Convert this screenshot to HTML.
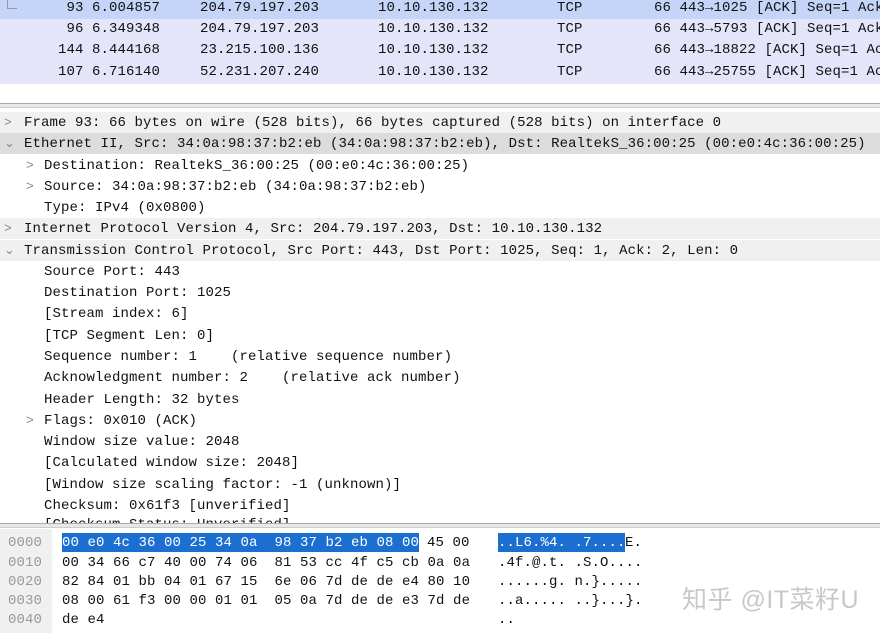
<!DOCTYPE html><html><head><style>
body{margin:0;width:880px;height:633px;overflow:hidden;background:#fff;font-family:"Liberation Mono",monospace;font-size:14px;color:#111;position:relative;letter-spacing:0.1px}
.r{position:absolute;left:0;width:880px;height:21px;line-height:21px;white-space:pre}
.t{position:absolute;top:0}
.d{position:absolute;left:0;width:880px;height:21.3px;line-height:22px;white-space:pre}
.d.b{background:#f0f0f0}
.d.s{background:#dcdcdc}
.d .a{position:absolute;left:4px;color:#888;font-size:13px}
.d .x{position:absolute}
.h{position:absolute;left:0;height:19.3px;line-height:20px;white-space:pre}
</style></head><body>
<div style="position:absolute;left:0;top:0;width:880px;height:84px;background:#e4e4fa"></div>
<div style="position:absolute;left:0;top:0;width:880px;height:19px;background:#c5d5f7"></div>
<div style="position:absolute;left:7px;top:0;width:9px;height:8px;border-left:1px solid #999;border-bottom:1px solid #999"></div>
<div class="r" style="top:-2px"><span class="t" style="left:41px">   93 6.004857</span><span class="t" style="left:200px">204.79.197.203</span><span class="t" style="left:378px">10.10.130.132</span><span class="t" style="left:557px">TCP</span><span class="t" style="left:654px">66 443→1025 [ACK] Seq=1 Ack</span></div>
<div class="r" style="top:19px"><span class="t" style="left:41px">   96 6.349348</span><span class="t" style="left:200px">204.79.197.203</span><span class="t" style="left:378px">10.10.130.132</span><span class="t" style="left:557px">TCP</span><span class="t" style="left:654px">66 443→5793 [ACK] Seq=1 Ack</span></div>
<div class="r" style="top:40px"><span class="t" style="left:41px">  144 8.444168</span><span class="t" style="left:200px">23.215.100.136</span><span class="t" style="left:378px">10.10.130.132</span><span class="t" style="left:557px">TCP</span><span class="t" style="left:654px">66 443→18822 [ACK] Seq=1 Ac</span></div>
<div class="r" style="top:62px"><span class="t" style="left:41px">  107 6.716140</span><span class="t" style="left:200px">52.231.207.240</span><span class="t" style="left:378px">10.10.130.132</span><span class="t" style="left:557px">TCP</span><span class="t" style="left:654px">66 443→25755 [ACK] Seq=1 Ac</span></div>
<div style="position:absolute;left:0;top:103px;width:880px;height:3px;border-top:1px solid #aaa;border-bottom:1px solid #ccc;background:#e8e8e8"></div>
<div class="d b" style="top:112px"><span class="a">&gt;</span><span class="x" style="left:24px">Frame 93: 66 bytes on wire (528 bits), 66 bytes captured (528 bits) on interface 0</span></div>
<div class="d s" style="top:133px"><span class="a">⌄</span><span class="x" style="left:24px">Ethernet II, Src: 34:0a:98:37:b2:eb (34:0a:98:37:b2:eb), Dst: RealtekS_36:00:25 (00:e0:4c:36:00:25)</span></div>
<div class="d" style="top:155px"><span class="a" style="left:26px">&gt;</span><span class="x" style="left:44px">Destination: RealtekS_36:00:25 (00:e0:4c:36:00:25)</span></div>
<div class="d" style="top:176px"><span class="a" style="left:26px">&gt;</span><span class="x" style="left:44px">Source: 34:0a:98:37:b2:eb (34:0a:98:37:b2:eb)</span></div>
<div class="d" style="top:197px"><span class="x" style="left:44px">Type: IPv4 (0x0800)</span></div>
<div class="d b" style="top:218px"><span class="a">&gt;</span><span class="x" style="left:24px">Internet Protocol Version 4, Src: 204.79.197.203, Dst: 10.10.130.132</span></div>
<div class="d b" style="top:240px"><span class="a">⌄</span><span class="x" style="left:24px">Transmission Control Protocol, Src Port: 443, Dst Port: 1025, Seq: 1, Ack: 2, Len: 0</span></div>
<div class="d" style="top:261px"><span class="x" style="left:44px">Source Port: 443</span></div>
<div class="d" style="top:282px"><span class="x" style="left:44px">Destination Port: 1025</span></div>
<div class="d" style="top:303px"><span class="x" style="left:44px">[Stream index: 6]</span></div>
<div class="d" style="top:325px"><span class="x" style="left:44px">[TCP Segment Len: 0]</span></div>
<div class="d" style="top:346px"><span class="x" style="left:44px">Sequence number: 1    (relative sequence number)</span></div>
<div class="d" style="top:367px"><span class="x" style="left:44px">Acknowledgment number: 2    (relative ack number)</span></div>
<div class="d" style="top:389px"><span class="x" style="left:44px">Header Length: 32 bytes</span></div>
<div class="d" style="top:410px"><span class="a" style="left:26px">&gt;</span><span class="x" style="left:44px">Flags: 0x010 (ACK)</span></div>
<div class="d" style="top:431px"><span class="x" style="left:44px">Window size value: 2048</span></div>
<div class="d" style="top:452px"><span class="x" style="left:44px">[Calculated window size: 2048]</span></div>
<div class="d" style="top:474px"><span class="x" style="left:44px">[Window size scaling factor: -1 (unknown)]</span></div>
<div class="d" style="top:495px"><span class="x" style="left:44px">Checksum: 0x61f3 [unverified]</span></div>
<div class="d" style="top:514px;height:10px;overflow:hidden"><span class="x" style="left:44px">[Checksum Status: Unverified]</span></div>
<div style="position:absolute;left:0;top:523px;width:880px;height:3px;border-top:1px solid #aaa;border-bottom:1px solid #ccc;background:#e8e8e8"></div>
<div style="position:absolute;left:0;top:529px;width:52px;height:104px;background:#f0f0f0"></div>
<div style="position:absolute;left:62px;top:533px;width:357px;height:19px;background:#1a6fd0"></div>
<div style="position:absolute;left:498px;top:533px;width:127px;height:19px;background:#1a6fd0"></div>
<div class="h" style="top:533px"><span class="t" style="left:8px;color:#999">0000</span><span class="t" style="left:62px;color:#fff">00 e0 4c 36 00 25 34 0a  98 37 b2 eb 08 00</span><span class="t" style="left:427px">45 00</span><span class="t" style="left:498px;color:#fff">..L6.%4. .7....</span><span class="t" style="left:625px">E.</span></div>
<div class="h" style="top:553px"><span class="t" style="left:8px;color:#999">0010</span><span class="t" style="left:62px">00 34 66 c7 40 00 74 06  81 53 cc 4f c5 cb 0a 0a</span><span class="t" style="left:498px">.4f.@.t. .S.O....</span></div>
<div class="h" style="top:572px"><span class="t" style="left:8px;color:#999">0020</span><span class="t" style="left:62px">82 84 01 bb 04 01 67 15  6e 06 7d de de e4 80 10</span><span class="t" style="left:498px">......g. n.}.....</span></div>
<div class="h" style="top:591px"><span class="t" style="left:8px;color:#999">0030</span><span class="t" style="left:62px">08 00 61 f3 00 00 01 01  05 0a 7d de de e3 7d de</span><span class="t" style="left:498px">..a..... ..}...}.</span></div>
<div class="h" style="top:610px"><span class="t" style="left:8px;color:#999">0040</span><span class="t" style="left:62px">de e4</span><span class="t" style="left:498px">..</span></div>
<div style="position:absolute;left:682px;top:580px;font-family:'Liberation Sans','Noto Sans CJK SC',sans-serif;font-size:25px;color:#c8c8c8;white-space:nowrap;letter-spacing:0.5px">知乎 @IT菜籽U</div>
</body></html>
